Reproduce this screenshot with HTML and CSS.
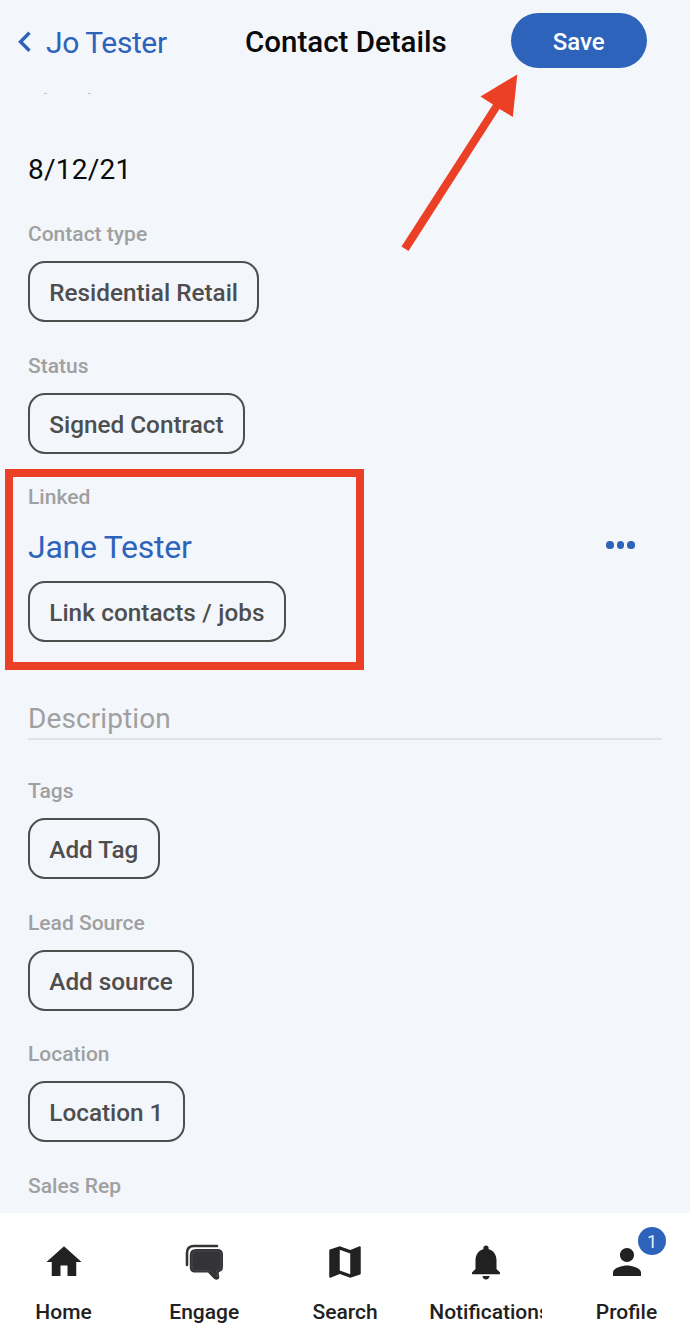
FILE: index.html
```html
<!DOCTYPE html>
<html lang="en">
<head>
  <meta charset="UTF-8">
  <meta name="viewport" content="width=device-width, initial-scale=1.0">
  <title>Contact Details</title>
  <link rel="stylesheet" href="styles.css">
</head>
<body>
  <div class="screen">
    <header class="header">
      <a class="back">
        <svg width="14" height="22" viewBox="0 0 14 22"><path d="M12.500 1.800 L3.500 10.800 L12.500 19.800" fill="none" stroke="#2e63bb" stroke-width="3.400"/></svg>
        <span>Jo Tester</span>
      </a>
      <h1>Contact Details</h1>
      <button class="save">Save</button>
    </header>

    <main class="content">
      <div class="date">8/12/21</div>
      <div class="date">8/12/21</div>

      <div class="field">
        <label>Contact type</label>
        <button class="chip">Residential Retail</button>
      </div>
      <div class="field">
        <label>Status</label>
        <button class="chip">Signed Contract</button>
      </div>
      <div class="field linked">
        <label>Linked</label>
        <div class="linked-row">
          <a class="name">Jane Tester</a>
          <div class="dots"><i></i><i></i><i></i></div>
        </div>
        <button class="chip link-chip">Link contacts / jobs</button>
        <div class="highlight"></div>
      </div>
      <div class="description">Description</div>
      <div class="field">
        <label>Tags</label>
        <button class="chip">Add Tag</button>
      </div>
      <div class="field">
        <label>Lead Source</label>
        <button class="chip">Add source</button>
      </div>
      <div class="field">
        <label>Location</label>
        <button class="chip">Location 1</button>
      </div>
      <div class="field last">
        <label>Sales Rep</label>
      </div>
    </main>

    <nav class="tabs">
      <a class="tab">
        <svg class="icon" viewBox="0 0 24 24"><path d="M10 20v-6h4v6h5v-8h3L12 3 2 12h3v8z"/></svg>
        <span>Home</span>
      </a>
      <a class="tab">
        <svg class="icon engage-icon" viewBox="0 0 42 42">
          <path d="M4 24 V12 Q4 5 11 5 H34" fill="none" stroke="#343436" stroke-width="2.600" stroke-linecap="round"/>
          <path d="M13 8 H34.500 Q40 8 40 13.500 V25.500 Q40 30.500 36 31 Q35.500 33 36.300 35.500 Q36.500 38 34.500 38.600 Q32 39.200 30 36.700 L25 31.600 H12.500 Q6.800 31.600 6.800 26 V14 Q6.800 8 13 8Z" fill="#343436"/>
          <path d="M13 10 H34 Q38 10 38 14.500 V25 Q38 29 33.500 29.500 Q33.500 33 35 36 L28 29.700 H13 Q9 29.700 9 25.500 V14.500 Q9 10 13 10Z" fill="none" stroke="#55555a" stroke-width=".6"/>
        </svg>
        <span>Engage</span>
      </a>
      <a class="tab">
        <svg class="icon" viewBox="0 0 24 24"><path d="M20.500 3l-.160.030L15 5.100 9 3 3.360 4.900c-.210.070-.360.250-.360.480V20.500c0 .280.220.500.500.500l.160-.030L9 18.900l6 2.100 5.640-1.900c.210-.070.360-.250.360-.480V3.500c0-.280-.220-.500-.500-.500zM15 19l-6-2.110V5l6 2.110V19z"/></svg>
        <span>Search</span>
      </a>
      <a class="tab">
        <svg class="icon" viewBox="0 0 24 24"><path d="M12 22c1.100 0 2-.900 2-2h-4c0 1.100.890 2 2 2zm6-6v-5c0-3.070-1.640-5.640-4.500-6.320V4c0-.830-.670-1.500-1.500-1.500s-1.500.670-1.500 1.500v.680C7.630 5.360 6 7.920 6 11v5l-2 2v1h16v-1l-2-2z"/></svg>
        <span>Notifications</span>
      </a>
      <a class="tab">
        <svg class="icon" viewBox="0 0 24 24"><path d="M12 12c2.210 0 4-1.790 4-4s-1.790-4-4-4-4 1.790-4 4 1.790 4 4 4zm0 2c-2.670 0-8 1.340-8 4v2h16v-2c0-2.660-5.330-4-8-4z"/></svg>
        <span>Profile</span>
        <b class="badge">1</b>
      </a>
    </nav>

    <svg class="arrow" width="120" height="180" viewBox="0 0 120 180">
      <path d="M117.300 4.500 L80.500 26.500 L93 34.500 L1.500 176.500 L8.500 181 L99.500 39 L112.800 47Z" fill="#eb4025"/>
    </svg>
  </div>
</body>
</html>
```

FILE: styles.css
```css
* {
  box-sizing: border-box;
}

body {
  margin: 0;
  font-family: Roboto, "Liberation Sans", sans-serif;
  background: #f3f6fb;
}

.screen {
  position: relative;
  width: 690px;
  height: 1338px;
  display: flex;
  flex-direction: column;
  overflow: hidden;
}

button {
  font-family: inherit;
  margin: 0;
}

/* header */
.header {
  height: 93px;
  padding: 13px 43px 0 17px;
  display: grid;
  grid-template-columns: 228px 1fr 136.500px;
  align-items: start;
  flex: none;
}

.back {
  display: flex;
  align-items: center;
  height: 59px;
  gap: 15px;
  color: #2e63bb;
  font-size: 30px;
  letter-spacing: -.4px;
}

.back svg {
  margin-top: -2px;
}

.header h1 {
  margin: 0;
  font-size: 29.500px;
  font-weight: 500;
  line-height: 59px;
  color: #0a0a0a;
  white-space: nowrap;
}

.save {
  height: 55px;
  border: none;
  border-radius: 28px;
  background: #2e63bb;
  color: #fff;
  font-size: 24px;
  font-weight: 500;
  padding: 2px 0 0;
}

/* form */
.content {
  flex: 1;
  min-height: 0;
  overflow: hidden;
  padding: 0 28px;
}

.date {
  height: 68px;
  line-height: 36px;
  font-size: 28px;
  letter-spacing: .25px;
  color: #0a0a0a;
}

/* scrolled up under the header */
.date:first-child {
  height: 60px;
  margin-top: -28px;
  margin-bottom: 27px;
  color: #777;
}

.field {
  position: relative;
  height: 131.500px;
}

.field label {
  display: block;
  height: 41px;
  line-height: 28px;
  font-size: 21px;
  font-weight: 500;
  color: #a0a0a0;
}

.chip {
  display: block;
  height: 61px;
  padding: 2px 19.300px 0;
  border: 2px solid #4e4e4e;
  border-radius: 17px;
  background: transparent;
  color: #4e4e4e;
  font-size: 24.300px;
  font-weight: 500;
}

.linked {
  height: 219px;
}

.linked-row {
  display: flex;
  justify-content: space-between;
  align-items: center;
  height: 56px;
  margin-top: -7px;
  margin-bottom: 9px;
}

.name {
  padding-top: 3px;
  color: #2e63bb;
  font-size: 32px;
  letter-spacing: -.25px;
}

.link-chip {
  margin-top: -1px;
  word-spacing: .5px;
}

.dots {
  display: flex;
  gap: 3px;
  margin-right: 27px;
}

.dots i {
  width: 7.700px;
  height: 7.700px;
  border-radius: 50%;
  background: #2e63bb;
}

.highlight {
  position: absolute;
  left: -23px;
  top: -14px;
  width: 359px;
  height: 201px;
  border: 8px solid #eb4025;
}

.description {
  height: 38px;
  margin-bottom: 37px;
  line-height: 34px;
  border-bottom: 2px solid #e1e3e6;
  font-size: 28px;
  letter-spacing: .1px;
  color: #a0a0a0;
}

/* bottom tabs */
.tabs {
  flex: none;
  height: 125px;
  display: flex;
  justify-content: space-between;
  padding: 0 7px 0 7px;
  background: #fff;
}

.tab {
  position: relative;
  width: 113px;
  padding-top: 28px;
  display: flex;
  flex-direction: column;
  align-items: center;
  color: #212121;
  font-size: 21px;
  font-weight: 500;
}

.tab span {
  max-width: 113px;
  margin-top: 16px;
  line-height: 27px;
  overflow: hidden;
  white-space: nowrap;
}

.icon {
  width: 42px;
  height: 42px;
  fill: #212121;
}

.badge {
  position: absolute;
  left: 68px;
  top: 14px;
  width: 28px;
  height: 28px;
  border-radius: 50%;
  background: #2e63bb;
  color: #e8eefa;
  font-size: 18px;
  font-weight: 400;
  line-height: 29px;
  text-align: center;
}

.arrow {
  position: absolute;
  left: 400px;
  top: 70px;
  overflow: visible;
}
```
